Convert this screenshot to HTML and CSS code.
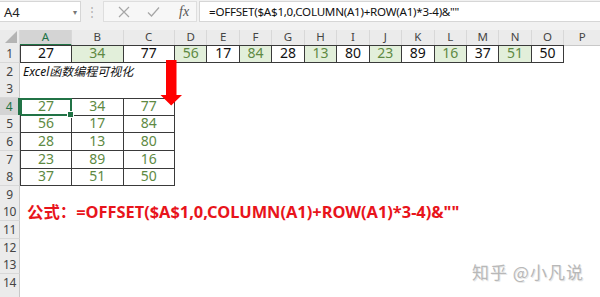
FILE: index.html
```html
<!DOCTYPE html>
<html>
<head>
<meta charset="utf-8">
<link rel="stylesheet" href="styles.css">
</head>
<body>
<div class="app">
  <div class="fbar">
    <div class="namebox"><span class="ref">A4</span><span class="dd">▾</span></div>
    <div class="grip">⋮</div>
    <div class="btns">
      <svg class="ico" width="12" height="12" viewBox="0 0 12 12"><path d="M1 1L11 11M11 1L1 11" stroke="#a6a6a6" stroke-width="1.2" fill="none"/></svg>
      <svg class="ico" width="13" height="12" viewBox="0 0 13 12"><path d="M1 6.5L4.5 10L12 1.5" stroke="#a6a6a6" stroke-width="1.2" fill="none"/></svg>
      <span class="fx">fx</span>
    </div>
    <div class="formula">=OFFSET($A$1,0,COLUMN(A1)+ROW(A1)*3-4)&amp;""</div>
  </div>
  <div class="sheet">
    <div class="row hdr">
      <div class="corner"><svg width="12" height="12" viewBox="0 0 12 12"><path d="M12 0V12H0Z" fill="#b4b4b4"/></svg></div>
      <div class="ch sel">A</div><div class="ch">B</div><div class="ch">C</div><div class="ch">D</div><div class="ch">E</div><div class="ch">F</div><div class="ch">G</div><div class="ch">H</div><div class="ch">I</div><div class="ch">J</div><div class="ch">K</div><div class="ch">L</div><div class="ch">M</div><div class="ch">N</div><div class="ch">O</div><div class="ch last">P</div>
    </div>
    <div class="row">
      <div class="rh">1</div>
      <div class="c b top first">27</div><div class="c b top g">34</div><div class="c b top">77</div><div class="c b top g">56</div><div class="c b top">17</div><div class="c b top g">84</div><div class="c b top">28</div><div class="c b top g">13</div><div class="c b top">80</div><div class="c b top g">23</div><div class="c b top">89</div><div class="c b top g">16</div><div class="c b top">37</div><div class="c b top g">51</div><div class="c b top">50</div>
    </div>
    <div class="row"><div class="rh">2</div><div class="c"><span class="note">Excel函数编程可视化</span></div></div>
    <div class="row"><div class="rh">3</div></div>
    <div class="row"><div class="rh sel">4</div><div class="c b top first t active">27</div><div class="c b top t">34</div><div class="c b top t">77</div></div>
    <div class="row"><div class="rh">5</div><div class="c b first t">56</div><div class="c b t">17</div><div class="c b t">84</div></div>
    <div class="row"><div class="rh">6</div><div class="c b first t">28</div><div class="c b t">13</div><div class="c b t">80</div></div>
    <div class="row"><div class="rh">7</div><div class="c b first t">23</div><div class="c b t">89</div><div class="c b t">16</div></div>
    <div class="row"><div class="rh">8</div><div class="c b first t">37</div><div class="c b t">51</div><div class="c b t">50</div></div>
    <div class="row"><div class="rh">9</div></div>
    <div class="row"><div class="rh">10</div><div class="c"><span class="red">公式：=OFFSET($A$1,0,COLUMN(A1)+ROW(A1)*3-4)&amp;""</span></div></div>
    <div class="row"><div class="rh">11</div></div>
    <div class="row"><div class="rh">12</div></div>
    <div class="row"><div class="rh">13</div></div>
    <div class="row"><div class="rh">14</div></div>
    <div class="row"><div class="rh"></div></div>
  </div>
  <svg class="arrow" width="24" height="46" viewBox="0 0 24 46"><path d="M6 0H16.5V35H22L11.2 45.5L0.5 35H6Z" fill="#ff0000"/></svg>
  <div class="wm">知乎 @小凡说</div>
</div>
</body>
</html>
```
FILE: styles.css
```css
* { box-sizing: border-box; }
html, body { margin: 0; padding: 0; }
body { width: 600px; height: 297px; overflow: hidden; background: #fff; }
.app { position: relative; width: 600px; height: 297px; overflow: hidden; background: #fff; font-family: "Noto Sans", "Noto Sans CJK SC", sans-serif; }
.fbar { height: 30px; background: #f1f1f1; display: flex; align-items: flex-start; padding-top: 1px; }
.namebox { width: 81px; height: 21px; background: #fff; border: 1px solid #d6d6d6; border-left: none; display: flex; align-items: center; justify-content: space-between; padding: 0 3px 0 4px; }
.ref { font-size: 13px; color: #222; }
.dd { font-size: 8px; color: #777; }
.grip { width: 22px; height: 21px; display: flex; align-items: center; justify-content: center; color: #b0b0b0; font-size: 12px; }
.btns { width: 94px; height: 21px; background: #f7f7f7; border: 1px solid #dedede; display: flex; align-items: center; padding-left: 14px; gap: 17px; }
.fx { font-family: "Liberation Serif", serif; font-style: italic; font-size: 14px; color: #555; margin-left: 2px; }
.formula { flex: 1; height: 21px; background: #fff; border: 1px solid #d6d6d6; border-right: none; margin-left: 2px; display: flex; align-items: center; padding-left: 9px; font-size: 11.6px; letter-spacing: -0.25px; color: #111; white-space: nowrap; }
.sheet { display: flex; flex-direction: column; }
.row { display: grid; grid-template-columns: 20px 52px 51.5px 51.5px repeat(12, 32.44px) 1fr; height: 17.6px; }
.row.hdr { height: 15px; background: #ebebeb; }
.corner { background: #ebebeb; border-right: 1px solid #d8d8d8; border-bottom: 1px solid #c8c8c8; display: flex; align-items: flex-end; justify-content: flex-end; padding: 0 2px 2px 0; }
.ch { font-size: 11.5px; color: #444; text-align: center; line-height: 14px; border-right: 1px solid #d8d8d8; border-bottom: 1px solid #c8c8c8; }
.ch.last { border-right: none; }
.ch.sel { background: #d4d4d4; color: #217346; border-bottom: 2px solid #217346; }
.rh { background: #ebebeb; border-bottom: 1px solid #d8d8d8; border-right: 1px solid #c8c8c8; font-size: 12px; color: #444; text-align: center; line-height: 17px; letter-spacing: -0.3px; }
.rh.sel { background: #d4d4d4; color: #217346; border-right: 2px solid #217346; }
.c { font-size: 14px; color: #111; text-align: center; line-height: 17px; white-space: nowrap; overflow: visible; position: relative; }
.c.b { border-right: 1px solid #3a3a3a; border-bottom: 1px solid #3a3a3a; line-height: 16px; }
.c.top { border-top: 1px solid #3a3a3a; line-height: 14.6px; }
.c.first { border-left: 1px solid #3a3a3a; }
.c.g { background: #e2efda; color: #5e8a43; }
.c.t { color: #5e8a43; }
.c.active::after { content: ""; position: absolute; left: -1px; top: -1px; right: -1px; bottom: -1px; border: 2px solid #217346; }
.c.active::before { content: ""; position: absolute; right: -3px; bottom: -3px; width: 5px; height: 5px; background: #217346; border: 1px solid #fff; z-index: 2; }
.note { position: absolute; left: 3px; top: 0; font-style: italic; font-size: 12px; color: #111; line-height: 17px; }
.red { position: absolute; left: 7px; top: -1px; font-weight: 700; font-size: 16.4px; color: #e8141b; line-height: 19px; font-family: "Noto Sans", "Noto Sans CJK SC", sans-serif; }
.arrow { position: absolute; left: 160px; top: 60px; }
.wm { position: absolute; left: 472px; top: 259px; font-size: 17px; color: #b8b8b8; text-shadow: 1px 1px 0 #e8e8e8; letter-spacing: 1px; font-family: "Noto Sans CJK SC", sans-serif; }
```
